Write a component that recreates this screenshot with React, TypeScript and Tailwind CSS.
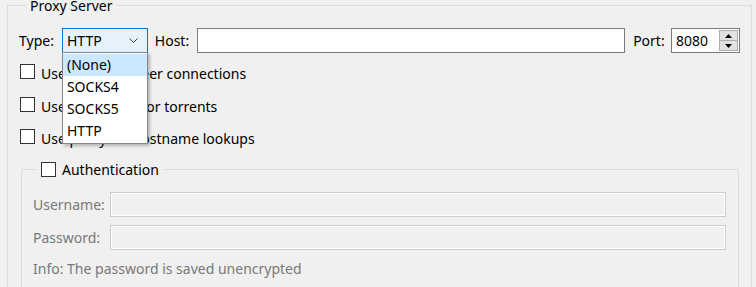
import React from "react";

function Check() {
  return <span className="inline-block w-[15px] h-[15px] border border-[#333333] bg-white shrink-0" />;
}

function CheckRow({ label, mt }: { label: string; mt: string }) {
  return (
    <div className={`flex items-center h-[16px] ${mt}`}>
      <span className="ml-[1px]"><Check /></span>
      <span className="ml-[6px] leading-[16px] pt-[2px]">{label}</span>
    </div>
  );
}

export default function App() {
  return (
    <div className="w-[756px] h-[287px] bg-[#f0f0f0] overflow-hidden text-[14px] text-black pl-[7px] pr-[4px] font-['Noto_Sans',sans-serif]">
      <fieldset className="relative border border-[#dcdcdc] pl-[11px] pr-[11px] pt-[18px] h-[320px] min-w-0">
        <legend className="ml-[8px] px-[3px] h-[10px] leading-[12px]">Proxy Server</legend>

        {/* Row 1 */}
        <div className="flex items-center h-[25px]">
          <span className="w-[43px]">Type:</span>
          <div className="relative w-[86px] h-[25px]">
            <div className="w-full h-full border border-[#0078d7] bg-[#e5f1fb] flex items-center pl-[4px]">
              <span>HTTP</span>
              <svg className="ml-auto mr-[9px]" width="9" height="6" viewBox="0 0 9 6">
                <polyline points="0.5,0.5 4.5,4.5 8.5,0.5" fill="none" stroke="#444" strokeWidth="1" />
              </svg>
            </div>
            {/* dropdown list */}
            <div className="absolute left-0 top-[24px] w-[86px] h-[92px] bg-white border border-[#828790] shadow-[2px_2px_3px_rgba(0,0,0,0.25)] z-10 pt-[1px]">
              <div className="h-[22px] leading-[22px] pl-[4px] bg-[#cce8ff]">(None)</div>
              <div className="h-[22px] leading-[22px] pl-[4px]">SOCKS4</div>
              <div className="h-[22px] leading-[22px] pl-[4px]">SOCKS5</div>
              <div className="h-[22px] leading-[22px] pl-[4px]">HTTP</div>
            </div>
          </div>
          <span className="ml-[7px] w-[42px]">Host:</span>
          <div className="w-[429px] h-[25px] border border-[#7a7a7a] bg-white" />
          <span className="ml-[8px] w-[38px]">Port:</span>
          <div className="w-[69px] h-[25px] border border-[#7a7a7a] bg-white flex items-center pl-[4px] pr-[1px]">
            <span>8080</span>
            <div className="ml-auto flex flex-col w-[19px] h-[21px]">
              <div className="flex-1 bg-[#e1e1e1] border border-[#adadad] flex items-center justify-center">
                <svg width="7" height="4" viewBox="0 0 7 4"><polygon points="0,4 3.5,0 7,4" fill="#000" /></svg>
              </div>
              <div className="flex-1 bg-[#e1e1e1] border border-t-0 border-[#adadad] flex items-center justify-center">
                <svg width="7" height="4" viewBox="0 0 7 4"><polygon points="0,0 7,0 3.5,4" fill="#000" /></svg>
              </div>
            </div>
          </div>
        </div>

        <CheckRow label="Use proxy for peer connections" mt="mt-[12px]" />
        <CheckRow label="Use proxy only for torrents" mt="mt-[17px]" />
        <CheckRow label="Use proxy for hostname lookups" mt="mt-[16px]" />

        {/* Authentication group */}
        <fieldset className="mt-[15px] ml-[2px] mr-[1px] border border-[#dcdcdc] pl-[11px] pr-[12px] pt-[15px] h-[200px] min-w-0">
          <legend className="ml-[3px] pl-[5px] pr-[4px] h-[16px] flex items-center">
            <Check />
            <span className="ml-[6px] leading-[16px] pt-[1px]">Authentication</span>
          </legend>
          <div className="flex items-center h-[25px] text-[#787878]">
            <span className="w-[77px]">Username:</span>
            <div className="w-[617px] h-[25px] border border-[#cccccc] bg-[#f0f0f0] shadow-[inset_0_0_0_1px_#ffffff]" />
          </div>
          <div className="flex items-center h-[25px] mt-[8px] text-[#787878]">
            <span className="w-[77px]">Password:</span>
            <div className="w-[617px] h-[25px] border border-[#cccccc] bg-[#f0f0f0] shadow-[inset_0_0_0_1px_#ffffff]" />
          </div>
          <div className="mt-[9px] h-[20px] leading-[20px] text-[#787878]">Info: The password is saved unencrypted</div>
        </fieldset>
      </fieldset>
    </div>
  );
}
